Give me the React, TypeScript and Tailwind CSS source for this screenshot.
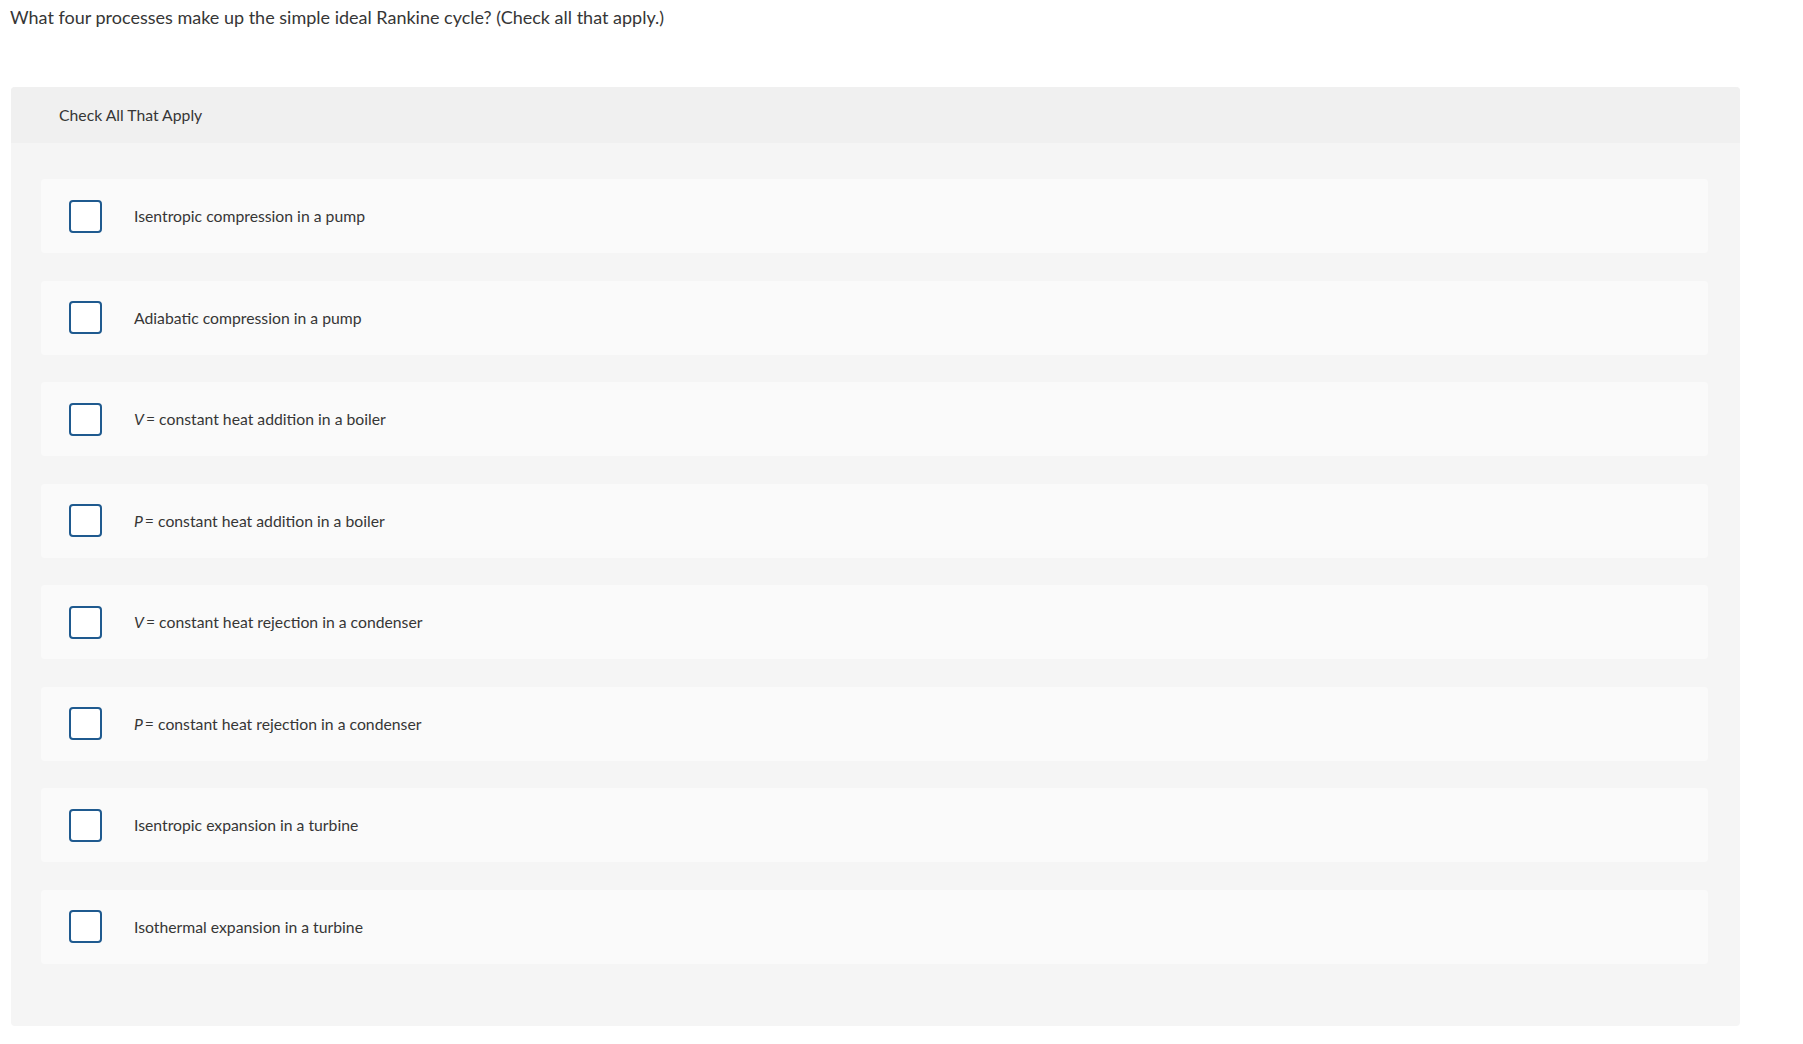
import React from "react";

const Var = ({ c }: { c: string }) => <i className="mr-[2px]">{c}</i>;

const items: React.ReactNode[] = [
  "Isentropic compression in a pump",
  "Adiabatic compression in a pump",
  <><Var c="V" />= constant heat addition in a boiler</>,
  <><Var c="P" />= constant heat addition in a boiler</>,
  <><Var c="V" />= constant heat rejection in a condenser</>,
  <><Var c="P" />= constant heat rejection in a condenser</>,
  "Isentropic expansion in a turbine",
  "Isothermal expansion in a turbine",
];

export default function App() {
  return (
    <div className="min-h-[1044px] bg-white text-[#363636]" style={{ fontFamily: "Lato, 'Open Sans', sans-serif" }}>
      <div className="pl-[10px] pt-[5px] h-[87px] text-[18px] leading-[24px]">
        What four processes make up the simple ideal Rankine cycle? (Check all that apply.)
      </div>
      <div className="ml-[11px] w-[1729px] rounded-[4px] overflow-hidden bg-[#f5f5f5]">
        <div className="h-[56px] bg-[#f0f0f0] flex items-center pl-[48px] text-[15.75px]">
          Check All That Apply
        </div>
        <div className="pt-[36px] pb-[62px] pl-[30px] pr-[32px] flex flex-col gap-[27.5px]">
          {items.map((t, i) => (
            <div key={i} className="h-[74px] rounded-[4px] bg-[#fafafa] flex items-center pl-[28px]">
              <div className="w-[33px] h-[33px] rounded-[4px] border-2 border-[#1f5a8f] bg-white shrink-0" />
              <div className="ml-[32px] text-[15.75px] text-[#363636]">{t}</div>
            </div>
          ))}
        </div>
      </div>
    </div>
  );
}
